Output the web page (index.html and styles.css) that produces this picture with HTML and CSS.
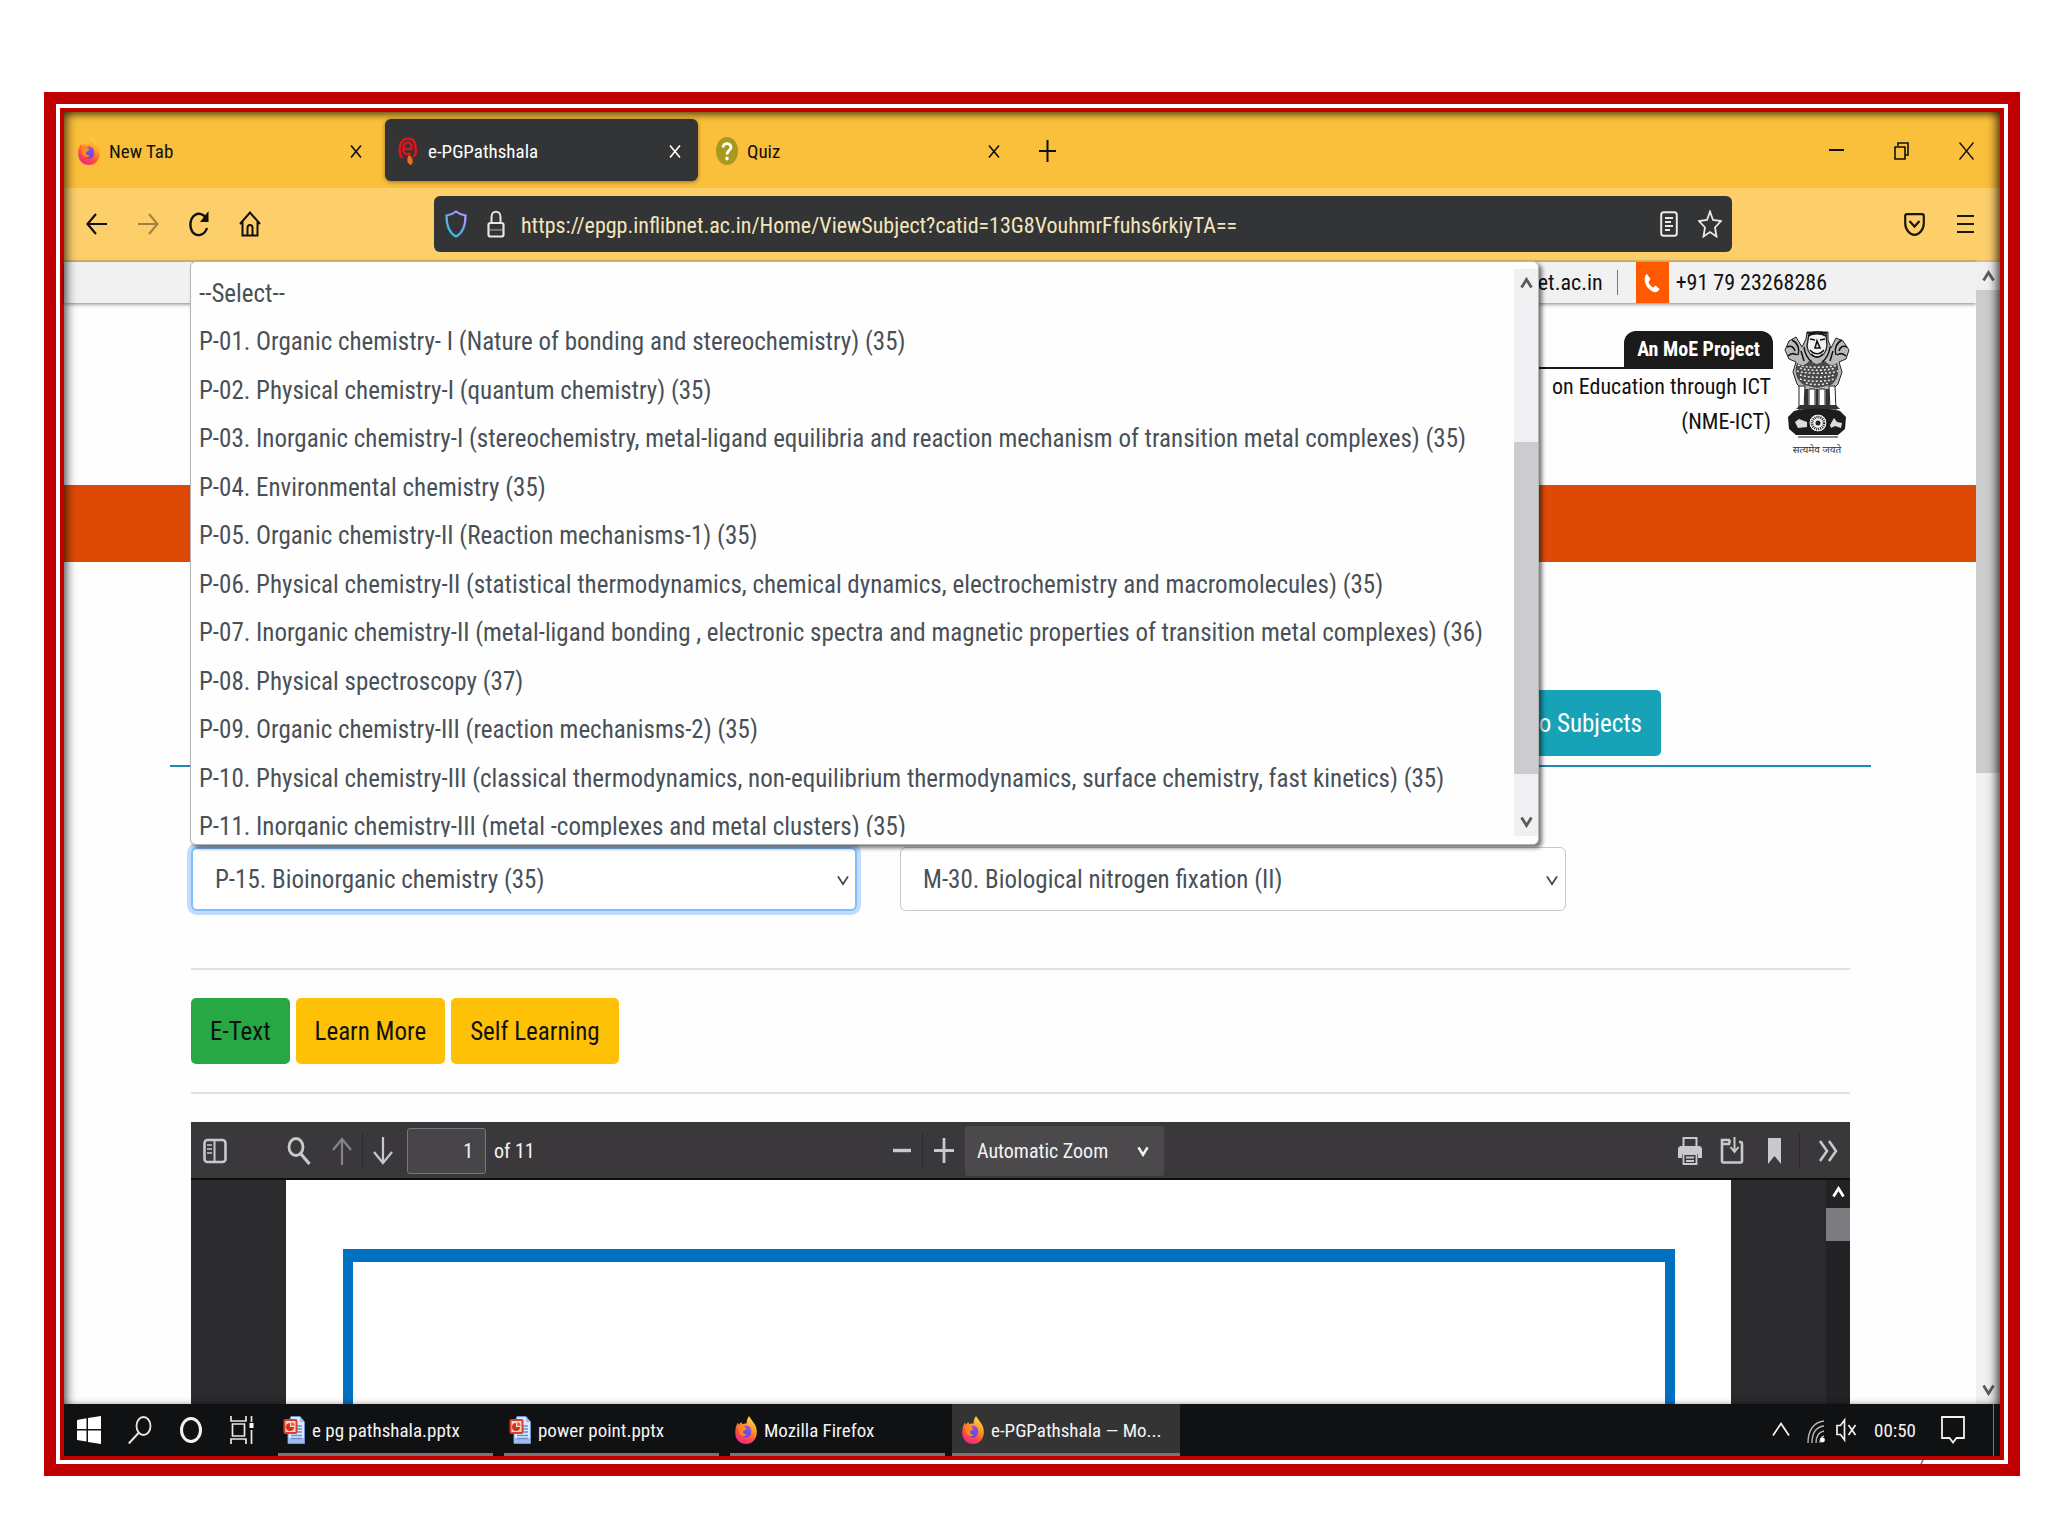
FILE: index.html
```
<!DOCTYPE html>
<html lang="en">
<head>
<meta charset="utf-8">
<title>e-PGPathshala</title>
<link rel="stylesheet" href="styles.css">
</head>
<body>
<svg class="defs" width="0" height="0" aria-hidden="true">
  <defs>
    <linearGradient id="fox-body" x1="0.8" y1="0" x2="0.3" y2="1">
      <stop offset="0" stop-color="#ffe14a"/><stop offset="0.4" stop-color="#ff9a26"/><stop offset="0.7" stop-color="#ff4b43"/><stop offset="1" stop-color="#f0268a"/>
    </linearGradient>
    <linearGradient id="fox-globe" x1="0.6" y1="0" x2="0.4" y2="1">
      <stop offset="0" stop-color="#a04bf0"/><stop offset="1" stop-color="#4b4fd8"/>
    </linearGradient>
    <linearGradient id="shield-line" x1="0.8" y1="0" x2="0.2" y2="1">
      <stop offset="0" stop-color="#b09bff"/><stop offset="0.5" stop-color="#6aa4ee"/><stop offset="1" stop-color="#27c6e6"/>
    </linearGradient>
    <symbol id="firefox" viewBox="0 0 22 28" preserveAspectRatio="none">
      <path fill="url(#fox-body)" d="M14 0c1 2 3 4 4.500 6.500C21 9.500 22 13 21.800 17 21.500 23.500 17 28 11 28S.3 23.500.2 17C.1 12 1.500 8.500 3 6.500l.6 2.200L6.500 6l.7 2.200C9 7.200 10.500 7.300 11.500 7.800 11.500 5 12.500 2 14 0z"/>
      <ellipse cx="11.300" cy="15.500" rx="5" ry="6" fill="url(#fox-globe)"/>
      <path fill="#ff8a1f" d="M3.500 11c2-1.500 5-1.500 6.500 0 1.500 1 1.500 2.500 0 3l-2 1.500c0 2 1.500 3.500 4 3-2 3-7.500 1.500-8.500-3z"/>
    </symbol>
    <symbol id="cross" viewBox="0 0 12 13"><path d="M1 .5l10 12M11 .5L1 12.500" fill="none" stroke="currentColor" stroke-width="1.600"/></symbol>
    <symbol id="pptx" viewBox="0 0 22 28">
      <path fill="#dbe8fb" stroke="#6f93cf" d="M8 .5h9L21.500 6v21.500H5V8z"/>
      <path fill="#9dbcf0" d="M17 1v5h4zM5.500 22h15.500v5H5.500z"/>
      <path stroke="#6c8fd0" stroke-width="1.500" d="M14 10h5M14 13h5M13 16h6M8 19.500h11M8 22.500h11"/>
      <rect x=".5" y="3" width="14" height="15" rx="2" fill="#d9402c"/>
      <rect x="2.500" y="5" width="10" height="11" fill="#f6d7cf"/>
      <path fill="#d9301c" d="M7 7a4 4 0 1 0 4 4H7z"/><path fill="#e8573f" d="M8.200 6.200v3.600h3.500a4 4 0 0 0-3.500-3.600z"/>
    </symbol>
    <symbol id="up" viewBox="0 0 13 12"><path d="M1.500 10.500l5-8 5 8" fill="none" stroke="currentColor" stroke-width="2.800"/></symbol>
    <symbol id="down" viewBox="0 0 13 12"><path d="M1.500 1.500l5 8 5-8" fill="none" stroke="currentColor" stroke-width="2.800"/></symbol>
    <symbol id="caret" viewBox="0 0 13 12"><path d="M1 1.500l5.500 8.500L12 1.500" fill="none" stroke="currentColor" stroke-width="2"/></symbol>
  </defs>
</svg>

<div class="frame">
<div class="window">

  <nav class="tabs" aria-label="Browser tabs">
    <div class="tab"><svg class="favicon"><use href="#firefox"/></svg><span class="tab-title">New Tab</span><button class="plain" aria-label="Close New Tab"><svg class="close"><use href="#cross"/></svg></button></div>
    <div class="tab active">
      <svg class="favicon" viewBox="0 0 22 28"><path d="M5 21C1 16 2 4 9 2c5-1 9 1 9 6 1 5 2 9-2 12" fill="none" stroke="#d8161c" stroke-width="2.600"/><path d="M6.500 12h8c.5-4-1-6.500-3.700-6.500S6 8.500 6.200 12.500 9 18.500 13.500 16" fill="none" stroke="#d8161c" stroke-width="2.500"/><path fill="#f26a1b" d="M12 18c4 2 5 8 2 10-4-1-5-6-2-10z"/><path fill="#7c1416" d="M16 20l4-1-1 3zM9 21l-3-1 2 4z"/></svg>
      <span class="tab-title">e-PGPathshala</span><button class="plain" aria-label="Close e-PGPathshala"><svg class="close"><use href="#cross"/></svg></button></div>
    <div class="tab"><svg class="favicon" viewBox="0 0 22 28"><ellipse cx="11" cy="14" rx="11" ry="14" fill="#a8991e"/><path d="M7 10.500c0-5 8-5 8-.3 0 3-4 3.300-4 7.300" fill="none" stroke="#fff" stroke-width="2.800"/><ellipse cx="11" cy="21.500" rx="1.700" ry="2" fill="#fff"/></svg><span class="tab-title">Quiz</span><button class="plain" aria-label="Close Quiz"><svg class="close"><use href="#cross"/></svg></button></div>
    <button class="plain new-tab" aria-label="New tab"><svg width="17" height="22" viewBox="0 0 17 22"><path d="M0 11h17M8.500 0v22" stroke="#111" stroke-width="2"/></svg></button>
    <div class="window-controls">
      <button class="plain" aria-label="Minimize"><svg width="15" height="18" viewBox="0 0 15 18"><path d="M0 8h15" stroke="#111" stroke-width="2"/></svg></button>
      <button class="plain" aria-label="Restore"><svg width="15" height="18" viewBox="0 0 15 18"><path d="M1 5h10v12H1zM4 4V1h10v12h-3" fill="none" stroke="#111" stroke-width="1.600"/></svg></button>
      <button class="plain" aria-label="Close window"><svg width="15" height="18" viewBox="0 0 15 18"><path d="M.5.5l14 17M14.500.5L.5 17.500" stroke="#111" stroke-width="1.400"/></svg></button>
    </div>
  </nav>

  <div class="toolbar">
    <div class="nav-buttons">
      <button class="plain" aria-label="Back"><svg width="22" height="26" viewBox="0 0 22 26"><path d="M21 13H2M10 3L1.500 13 10 23" fill="none" stroke="#111" stroke-width="2.200"/></svg></button>
      <button class="plain" aria-label="Forward"><svg width="22" height="26" viewBox="0 0 22 26"><path d="M1 13h19M12 3l8.500 10L12 23" fill="none" stroke="#a1803c" stroke-width="2"/></svg></button>
      <button class="plain" aria-label="Reload"><svg width="22" height="26" viewBox="0 0 22 26"><path d="M18 7C15.500 3 11 1.500 7 4 2 7 1 16 4.500 21c4 5 12 4 14.500-4" fill="none" stroke="#111" stroke-width="2.400"/><path d="M20.500 0v11H12z" fill="#111"/></svg></button>
      <button class="plain" aria-label="Home"><svg width="22" height="26" viewBox="0 0 22 26"><path d="M1 13L11 1.500 21 13M3.500 11v13.500h15V11M8.500 24v-7c0-4 5-4 5 0v7" fill="none" stroke="#111" stroke-width="2"/></svg></button>
    </div>
    <div class="url-bar">
      <svg width="22" height="28" viewBox="0 0 22 28"><path d="M11 1.500c3 2.500 6 3.500 9.500 4C20.500 16 17 23.500 11 26.500 5 23.500 1.500 16 1.500 5.500 5 5 8 4 11 1.500z" fill="none" stroke="url(#shield-line)" stroke-width="2.200"/></svg>
      <svg width="18" height="28" viewBox="0 0 18 28"><rect x="1.500" y="13" width="15" height="13.500" rx="2" fill="none" stroke="#e6e6e6" stroke-width="2.200"/><path d="M4.500 13V7c0-7 9-7 9 0v6" fill="none" stroke="#e6e6e6" stroke-width="2"/><path d="M3 20h12" stroke="#8a8a8b" stroke-width="1.500"/></svg>
      <input class="url" type="text" aria-label="Address" value="https://epgp.inflibnet.ac.in/Home/ViewSubject?catid=13G8VouhmrFfuhs6rkiyTA==">
      <button class="plain" aria-label="Reader view"><svg width="18" height="26" viewBox="0 0 18 26"><rect x="1.200" y="1.200" width="15.600" height="23.600" rx="2.500" fill="none" stroke="#e9e9e9" stroke-width="2"/><path d="M5 7h8M5 11h6M5 15h8M5 19h5" stroke="#e9e9e9" stroke-width="1.800"/></svg></button>
      <button class="plain" aria-label="Bookmark"><svg width="24" height="28" viewBox="0 0 24 28"><path d="M12 1.500l3 8.500 8 1-6 6.500 1.500 9L12 22l-6.500 4.500 1.500-9L1 11l8-1z" fill="none" stroke="#e9e9e9" stroke-width="1.800"/></svg></button>
    </div>
    <div class="toolbar-end">
      <button class="plain" aria-label="Pocket"><svg width="21" height="23" viewBox="0 0 21 23"><path d="M3 1.200h15c1 0 1.800.8 1.800 1.800v7c0 7-4.800 11.800-9.300 11.800S1.200 17 1.200 10V3c0-1 .8-1.800 1.800-1.800zM5.500 8l5 5.500 5-5.500" fill="none" stroke="#1c1808" stroke-width="2.200"/></svg></button>
      <button class="plain" aria-label="Menu"><svg width="17" height="20" viewBox="0 0 17 20"><path d="M0 2h17M0 10h17M0 18h17" stroke="#1c1808" stroke-width="2.200"/></svg></button>
    </div>
  </div>

  <div class="viewport">
    <main class="page">
      <div class="contact">
        <a class="mail" href="#">inflibnet.ac.in</a>
        <span class="phone-icon"><svg width="16" height="20" viewBox="0 0 16 20"><path d="M3 1l3.500 5L4.500 9c1 3 2.500 4.500 5 5.500l2-2 4 3.500c-1 3-4 4-7 2.500C4 16 1 12 .7 7 .5 4 1 2 3 1z" fill="#fff"/></svg></span>
        <a href="#">+91 79 23268286</a>
      </div>
      <header class="masthead">
        <div class="project">
          <div class="badge-row"><strong class="badge">An MoE Project</strong></div>
          <p>on Education through ICT<br>(NME-ICT)</p>
        </div>
        <figure class="emblem">
          <svg width="66" height="110" viewBox="0 0 66 110">
            <path fill="#b9b9b9" stroke="#222" d="M23 3h21v8l3 8 5-10 7 3 6 9-3 9-7 3 3 10-4 12-6 6v22H19V61l-6-6-4-12 3-10-7-3-4-9 4-9 7-4 6 10 4-8z"/>
            <path fill="#4a4a4a" d="M13 34c5 3 8 3 12-2l8 3 8-3c4 5 8 5 12 2 3 8 1 17-6 22l-14 3-13-3c-8-5-10-14-7-22z"/>
            <path fill="none" stroke="#eee" stroke-width="1.500" stroke-dasharray="2 2" d="M14 36c6 3 32 3 39 0M16 39c6 3 28 3 35 0M13 42c8 3 33 3 41 0M16 46c8 3 28 3 34 0M16 50c7 3 28 3 34 0M22 54c6 2 17 2 22 0"/>
            <path fill="#f2f2f2" stroke="#222" stroke-width="1.400" d="M25 5c5-3 12-3 17 0l1 12c-1 7-5 11-10 11s-9-4-10-11z"/>
            <path fill="none" stroke="#111" stroke-width="1.600" d="M26 10l5 1M36 11l5-1M33 12l-2 7h5zM26 21c4 5 10 5 14 0M27 25c4 4 8 4 12 0M23 4l20 0M24 7c5-3 13-3 18 0"/>
            <path fill="none" stroke="#111" stroke-width="1.500" d="M8 11c6 3 8 9 6 15M3 18c4-2 7 0 8 4M4 27c3-3 6-3 9-1M58 11c-6 3-8 9-6 15M63 18c-4-2-7 0-8 4M62 27c-3-3-6-3-9-1M17 22l3 10M49 22l-3 10M20 18c1 8 4 12 8 15M46 18c-1 8-4 12-8 15"/>
            <path fill="#fff" stroke="#222" d="M15 57h6l-1 24h-5zM25 60h6v21h-6zM35 60h6v21h-6zM45 57h6l1 24h-6z"/>
            <path fill="#333" d="M21 60h3v20h-3zM32 60h2v20h-2zM42 60h3v20h-3zM12 80l4-4h36l4 4z"/>
            <path fill="#1d1d1d" d="M10 82c9-3 37-3 46 0l6 6-1 12-7 6H12l-7-6-1-12z"/>
            <circle cx="34" cy="94" r="9" fill="#eee" stroke="#111"/>
            <circle cx="34" cy="94" r="6" fill="none" stroke="#222" stroke-width="2.500" stroke-dasharray="1 1"/>
            <circle cx="34" cy="94" r="2.500" fill="#222"/>
            <path fill="#ddd" d="M11 93l4-3 8 3 0 5-9 1zM46 96l4-7 3 4 5 1-1 5-6-2-4 2z"/>
            <path stroke="#888" stroke-width="2" d="M14 108h40"/>
          </svg>
          <figcaption lang="hi">सत्यमेव जयते</figcaption>
        </figure>
      </header>
      <div class="band"></div>

      <div class="content">
        <div class="title-row"><button class="btn info">Go To Subjects</button></div>
        <div class="selectors">
          <div class="field">
            <select class="choice focused" aria-label="Paper"><option>P-15. Bioinorganic chemistry (35)</option></select>
            <svg class="caret"><use href="#caret"/></svg>
            <div class="popup">
              <ul class="options" role="listbox" aria-label="Papers">
                <li role="option">--Select--</li>
                <li role="option">P-01. Organic chemistry- I (Nature of bonding and stereochemistry) (35)</li>
                <li role="option">P-02. Physical chemistry-I (quantum chemistry) (35)</li>
                <li role="option">P-03. Inorganic chemistry-I (stereochemistry, metal-ligand equilibria and reaction mechanism of transition metal complexes) (35)</li>
                <li role="option">P-04. Environmental chemistry (35)</li>
                <li role="option">P-05. Organic chemistry-II (Reaction mechanisms-1) (35)</li>
                <li role="option">P-06. Physical chemistry-II (statistical thermodynamics, chemical dynamics, electrochemistry and macromolecules) (35)</li>
                <li role="option">P-07. Inorganic chemistry-II (metal-ligand bonding , electronic spectra and magnetic properties of transition metal complexes) (36)</li>
                <li role="option">P-08. Physical spectroscopy (37)</li>
                <li role="option">P-09. Organic chemistry-III (reaction mechanisms-2) (35)</li>
                <li role="option">P-10. Physical chemistry-III (classical thermodynamics, non-equilibrium thermodynamics, surface chemistry, fast kinetics) (35)</li>
                <li role="option">P-11. Inorganic chemistry-III (metal -complexes and metal clusters) (35)</li>
              </ul>
              <div class="scroll popup-scroll"><svg class="arrow"><use href="#up"/></svg><span class="thumb"></span><svg class="arrow"><use href="#down"/></svg></div>
            </div>
          </div>
          <div class="field">
            <select class="choice" aria-label="Module"><option>M-30. Biological nitrogen fixation (II)</option></select>
            <svg class="caret"><use href="#caret"/></svg>
          </div>
        </div>
        <hr>
        <div class="actions">
          <button class="btn success">E-Text</button>
          <button class="btn warning">Learn More</button>
          <button class="btn warning">Self Learning</button>
        </div>
        <hr>

        <section class="viewer" aria-label="Document viewer">
          <div class="viewer-bar">
            <div class="bar-group start">
              <button class="plain" aria-label="Toggle sidebar"><svg width="24" height="26" viewBox="0 0 24 26"><rect x="1.500" y="2" width="21" height="22" rx="3" fill="none" stroke="#c9c9cb" stroke-width="2.600"/><path d="M11.500 2v22" stroke="#c9c9cb" stroke-width="2"/><path d="M4 7h5M4 11h5M4 15h5" stroke="#c9c9cb" stroke-width="1.600"/></svg></button>
              <button class="plain find" aria-label="Find"><svg width="24" height="28" viewBox="0 0 24 28"><ellipse cx="9" cy="10" rx="7" ry="8.500" fill="none" stroke="#c9c9cb" stroke-width="2.800"/><path d="M14 17l8.500 10" stroke="#c9c9cb" stroke-width="3.200"/></svg></button>
              <button class="plain" aria-label="Previous page"><svg width="20" height="28" viewBox="0 0 20 28"><path d="M10 28V2M1 13L10 2l9 11" fill="none" stroke="#868487" stroke-width="2.200"/></svg></button>
              <span class="sep"></span>
              <button class="plain" aria-label="Next page"><svg width="20" height="28" viewBox="0 0 20 28"><path d="M10 0v26M1 15l9 11 9-11" fill="none" stroke="#c9c9cb" stroke-width="2.200"/></svg></button>
              <input class="page-number" type="text" value="1" aria-label="Page">
              <span>of 11</span>
            </div>
            <div class="bar-group">
              <button class="plain" aria-label="Zoom out"><svg width="18" height="26" viewBox="0 0 18 26"><path d="M0 12.500h18" stroke="#c9c9cb" stroke-width="3.400"/></svg></button>
              <span class="sep"></span>
              <button class="plain" aria-label="Zoom in"><svg width="20" height="26" viewBox="0 0 20 26"><path d="M0 12.500h20M10 0v25" stroke="#c9c9cb" stroke-width="2.800"/></svg></button>
              <div class="zoom-field"><select class="zoom" aria-label="Zoom"><option>Automatic Zoom</option></select><svg class="zoom-caret"><use href="#down"/></svg></div>
            </div>
            <div class="bar-group end">
              <button class="plain" aria-label="Print"><svg width="24" height="28" viewBox="0 0 24 28"><path d="M5.500 9V1h13v8" fill="none" stroke="#c9c9cb" stroke-width="2"/><path fill="#c9c9cb" d="M2 9h20l2 2v10h-4v-4H4v4H0V11z"/><path d="M5.500 17h13v10h-13zM8 20.500h8M8 24h8" fill="none" stroke="#c9c9cb" stroke-width="1.800"/></svg></button>
              <button class="plain" aria-label="Save"><svg width="24" height="28" viewBox="0 0 24 28"><path d="M10 3H2v21c0 1 .5 1.500 1.500 1.500h17c1 0 1.500-.5 1.500-1.500V7c0-1-.5-2-1.500-2H19M3 7h6l1-4" fill="none" stroke="#c9c9cb" stroke-width="2.600"/><path d="M14.500 0v14M10.500 10l4 5 4-5" fill="none" stroke="#c9c9cb" stroke-width="2"/></svg></button>
              <button class="plain mark" aria-label="Bookmark view"><svg width="13" height="28" viewBox="0 0 13 28"><path d="M0 1h13v26l-6.500-8L0 27z" fill="#c9c9cb"/></svg></button>
              <span class="sep"></span>
              <button class="plain" aria-label="Tools"><svg width="20" height="24" viewBox="0 0 20 24"><path d="M2 2l7 10-7 10M11 2l7 10-7 10" fill="none" stroke="#c9c9cb" stroke-width="2.600"/></svg></button>
            </div>
          </div>
          <div class="viewer-body">
            <div class="sheet"><div class="sheet-border"></div></div>
            <div class="scroll viewer-scroll"><svg class="arrow"><use href="#up"/></svg><span class="thumb"></span></div>
          </div>
        </section>
      </div>
    </main>
    <div class="scroll page-scroll"><svg class="arrow"><use href="#up"/></svg><span class="thumb"></span><svg class="arrow"><use href="#down"/></svg></div>
  </div>

  <footer class="taskbar">
    <div class="system">
      <button class="plain" aria-label="Start"><svg width="24" height="28" viewBox="0 0 24 28"><path fill="#fff" d="M0 4l9.500-1.700V13H0zM11 2l13-2v13H11zM0 14.500h9.500v11L0 24zM11 14.500h13V28l-13-2z"/></svg></button>
      <button class="plain" aria-label="Search"><svg width="24" height="28" viewBox="0 0 24 28"><ellipse cx="15.500" cy="10" rx="7" ry="9" fill="none" stroke="#e8e8e8" stroke-width="1.800"/><path d="M10.500 17L.8 27.500" stroke="#e8e8e8" stroke-width="2"/></svg></button>
      <button class="plain" aria-label="Assistant"><svg width="24" height="28" viewBox="0 0 24 28"><ellipse cx="12" cy="14" rx="9.500" ry="11.500" fill="none" stroke="#f2f2f2" stroke-width="3"/></svg></button>
      <button class="plain" aria-label="Task view"><svg width="24" height="28" viewBox="0 0 24 28"><path d="M1 0v5h15V0M1 28v-5h15v5M2.500 8h12v12h-12zM21.500 0v6M21.500 14v14" fill="none" stroke="#e8e8e8" stroke-width="1.700"/><path fill="#fff" d="M19.500 7h4v5h-4z"/></svg></button>
    </div>
    <div class="tasks">
      <button class="task"><svg class="favicon"><use href="#pptx"/></svg>e pg pathshala.pptx</button>
      <button class="task"><svg class="favicon"><use href="#pptx"/></svg>power point.pptx</button>
      <button class="task"><svg class="favicon"><use href="#firefox"/></svg>Mozilla Firefox</button>
      <button class="task current"><svg class="favicon"><use href="#firefox"/></svg>e-PGPathshala — Mo...</button>
    </div>
    <div class="tray">
      <svg width="18" height="28" viewBox="0 0 18 28"><path d="M1 19.500l8-12 8 12" fill="none" stroke="#f2f2f2" stroke-width="1.800"/></svg>
      <svg class="wifi" width="18" height="28" viewBox="0 0 18 28"><path d="M1 27C1 14 7 6 17 5M5 27C5 17 9 11 17 10M9 27c0-7 3-11 8-12M13 27c0-4 1-6 4-7" fill="none" stroke="#b5b5b5" stroke-width="1.400"/><circle cx="15.500" cy="24" r="2.400" fill="#fff"/></svg>
      <svg width="21" height="28" viewBox="0 0 21 28"><path d="M1 9.500h3.500L8.500 4v20l-4-5.500H1zM12.500 9l7 10M19.500 9l-7 10" fill="none" stroke="#f2f2f2" stroke-width="1.700"/></svg>
      <time>00:50</time>
      <svg class="notice" width="24" height="28" viewBox="0 0 24 28"><path d="M1 1h22v21h-7.500L12 26.500 8.500 22H1z" fill="none" stroke="#f2f2f2" stroke-width="1.800"/></svg>
    </div>
  </footer>

</div>
<svg class="tick" width="5" height="4" viewBox="0 0 5 4"><path d="M4 0L2 4" stroke="#777" stroke-width="1.600"/></svg>
</div>
</body>
</html>
```
FILE: styles.css
```
* { box-sizing: border-box; }

body {
  margin: 0;
  min-height: 100vh;
  display: flex;
  flex-direction: column;
  padding: 92px 28px 60px 44px;
  background: #fff;
  font-family: "Roboto Condensed", Roboto, "Liberation Sans", sans-serif;
  font-size: 19px;
  color: #111;
}

svg { display: block; flex: none; }
.defs { position: absolute; }
a { color: inherit; text-decoration: none; }
button, input, select { font: inherit; color: inherit; }
.plain { border: 0; padding: 0; background: none; display: block; flex: none; }

.frame {
  position: relative;
  flex: 1;
  display: flex;
  border: 12px solid #be0000;
  padding: 4px;
  background: #fff;
}
.tick { position: absolute; right: 84px; bottom: 0; }
.window {
  position: relative;
  flex: 1;
  min-width: 0;
  display: flex;
  flex-direction: column;
  border: 4px solid #be0000;
}
.window::after {
  content: "";
  position: absolute;
  inset: 0 0 52px;
  pointer-events: none;
  box-shadow: inset 0 5px 6px -1px rgba(0, 0, 0, .4), inset 8px 0 10px -4px rgba(0, 0, 0, .5), inset -8px 0 10px -4px rgba(0, 0, 0, .6);
}

/* browser chrome */
.tabs {
  display: flex;
  align-items: center;
  gap: 6px;
  padding: 7px 26px 7px 2px;
  background: #fabf3b;
}
.tab {
  width: 313px;
  height: 62px;
  display: flex;
  align-items: center;
  gap: 9px;
  padding: 2px 17px 0 12px;
  border-radius: 6px;
}
.tab.active { background: #333435; color: #fff; box-shadow: 0 1px 4px rgba(0, 0, 0, .4); }
.tab-title { flex: 1; }
.favicon { width: 22px; height: 28px; }
.close { width: 12px; height: 13px; }
.new-tab { margin-left: 16px; padding-top: 2px; }
.window-controls { margin-left: auto; display: flex; gap: 50px; padding-top: 2px; }

.toolbar {
  display: flex;
  align-items: center;
  height: 74px;
  padding: 0 26px 0 22px;
  background: #fccf6b;
  border-bottom: 2px solid #e3bd6c;
}
.nav-buttons { display: flex; gap: 29px; width: 348px; flex: none; }
.url-bar {
  flex: 1;
  height: 56px;
  display: flex;
  align-items: center;
  gap: 20px;
  padding: 0 10px 0 11px;
  border-radius: 6px;
  background: #333435;
}
.url {
  flex: 1;
  min-width: 0;
  border: 0;
  padding: 2px 0 0;
  margin-left: -4px;
  background: none;
  color: #f3e6bd;
  font-size: 22px;
}
.toolbar-end { width: 242px; flex: none; display: flex; align-items: center; justify-content: flex-end; gap: 32px; }

/* scrollbars */
.viewport { flex: 1; display: flex; min-height: 0; }
.scroll { width: 24px; flex: none; display: flex; flex-direction: column; align-items: center; background: #f0eff1; color: #5b5b5d; }
.arrow { width: 13px; height: 12px; margin: 8px 0; }
.thumb { width: 100%; background: #cccbcd; }
.thumb + .arrow { margin-top: auto; }
.page-scroll .thumb { height: 483px; }

/* page */
.page { flex: 1; min-width: 0; display: flex; flex-direction: column; background: #fefefe; }
.contact {
  display: flex;
  align-items: center;
  justify-content: flex-end;
  height: 41px;
  padding-right: 149px;
  background: #f1f1f2;
  box-shadow: 0 1px 4px rgba(0, 0, 0, .5);
  font-size: 22px;
}
.mail { padding-right: 14px; margin-right: 18px; border-right: 1px solid #777; }
.phone-icon { width: 33px; height: 41px; margin-right: 7px; display: grid; place-items: center; background: #ff5a00; }

.masthead {
  display: flex;
  justify-content: flex-end;
  align-items: flex-start;
  gap: 11px;
  height: 182px;
  padding: 26px 126px 0 0;
  font-size: 22px;
}
.project { min-width: 320px; text-align: right; padding-top: 2px; }
.project p { margin: 0; line-height: 35px; padding-right: 2px; }
.badge-row { border-bottom: 2px solid #1a1a1a; display: flex; justify-content: flex-end; }
.badge { padding: 0 13px; line-height: 36px; border-radius: 12px 12px 0 0; background: #1a1a1a; color: #fff; font-size: 20px; }
.emblem { margin: 0; text-align: center; }
.emblem figcaption { padding-top: 2px; font: 10px/16px "Noto Sans", sans-serif; color: #333; }
.band { height: 77px; background: #dd4a06; }

.content { flex: 1; display: flex; flex-direction: column; padding: 0 126px 0 127px; font-size: 25px; }
.title-row {
  display: flex;
  justify-content: flex-end;
  margin: 0 -21px;
  padding: 128px 210px 9px 0;
  border-bottom: 2px solid #1a8bb5;
}
.btn { height: 66px; border: 0; border-radius: 5px; padding: 0 19px; color: #111; }
.info { background: #17a2b8; color: #fff; }
.success { background: #28a745; }
.warning { background: #ffc107; }

.selectors { display: grid; grid-template-columns: repeat(2, minmax(0, 666px)); gap: 43px; padding: 80px 0 57px; }
.field { position: relative; }
.choice {
  width: 100%;
  height: 64px;
  padding: 0 22px;
  appearance: none;
  background: #fff;
  border: 1px solid #c4c8cc;
  border-radius: 6px;
  color: #495057;
}
.focused { border: 2px solid #80bdff; box-shadow: 0 0 0 4px #bfdcff; }
.caret { position: absolute; right: 8px; top: 28px; width: 12px; height: 11px; color: #444; }
.popup {
  position: absolute;
  left: -1px;
  bottom: 66px;
  z-index: 2;
  display: flex;
  width: 1349px;
  height: 584px;
  padding: 7px 0 8px;
  background: #fefefe;
  border: 1px solid #b5b5b8;
  border-radius: 6px;
  box-shadow: 3px 3px 4px rgba(0, 0, 0, .55);
  color: #495057;
}
.options {
  flex: 1;
  height: 568px;
  margin: 0;
  padding: 0 0 0 8px;
  display: grid;
  grid-template-rows: repeat(12, calc(582px / 12));
  align-items: center;
  overflow: hidden;
  list-style: none;
  white-space: nowrap;
}
.popup-scroll .thumb { height: 332px; margin-top: 145px; }

hr { width: 100%; height: 2px; margin: 0; border: 0; background: #e0e1e3; }
.actions { display: flex; gap: 6px; padding: 28px 0; }

/* document viewer */
.viewer { flex: 1; display: flex; flex-direction: column; margin-top: 28px; font-size: 20px; color: #f4f4f4; }
.viewer-bar {
  display: flex;
  align-items: center;
  height: 58px;
  padding: 2px 12px 0;
  background: #3a383b;
  border-bottom: 2px solid #0d0d0e;
}
.bar-group { display: flex; align-items: center; gap: 11px; }
.start, .end { flex: 1; }
.start { gap: 10px; padding-right: 16px; }
.end { justify-content: flex-end; gap: 18px; }
.find { margin: 0 11px 0 50px; }
.mark { margin-left: 6px; }
.sep { width: 1px; height: 36px; background: #29282a; }
.page-number {
  width: 79px;
  height: 46px;
  margin: 0 -2px 0 4px;
  padding: 0 12px;
  text-align: right;
  background: #474548;
  border: 1px solid #78767a;
  border-radius: 3px;
}
.zoom-field { position: relative; }
.zoom { width: 199px; height: 50px; padding: 0 12px; appearance: none; border: 0; border-radius: 3px; background: #4b494c; }
.zoom-caret { position: absolute; right: 15px; top: 20px; width: 12px; height: 11px; }
.viewer-body { flex: 1; display: flex; padding-left: 95px; background: #2b2a2c; }
.sheet { flex: 1; display: flex; margin-right: 95px; padding: 69px 56px 0 57px; background: #fff; }
.sheet-border { flex: 1; border: solid #0070c0; border-width: 13px 10px 0; }
.viewer-scroll { background: #242225; color: #fff; }
.viewer-scroll .arrow { margin: 6px 0 10px; }
.viewer-scroll .thumb { height: 33px; background: #7d7b7f; }

/* taskbar */
.taskbar { display: flex; height: 52px; background: #101113; color: #f4f4f4; }
.system { display: flex; align-items: center; gap: 27px; padding: 0 24px 0 13px; flex: none; }
.tasks { flex: 1; display: flex; gap: 11px; }
.task {
  width: 215px;
  display: flex;
  align-items: center;
  gap: 7px;
  border: 0;
  border-bottom: 3px solid #767676;
  padding: 3px 5px 0;
  background: none;
  white-space: nowrap;
}
.current { width: 228px; margin-left: -4px; padding: 3px 10px 0; background: #343435; }
.tray { display: flex; align-items: center; gap: 17px; padding: 0 28px 0 0; margin-right: 6px; border-right: 1px solid #777; }
.wifi { margin-right: -6px; }
.notice { margin-left: 8px; }
```
